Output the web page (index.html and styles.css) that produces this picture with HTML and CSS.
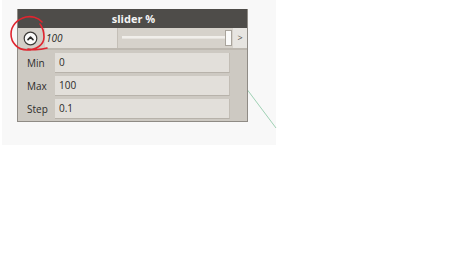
FILE: index.html
```html
<!DOCTYPE html>
<html>
<head>
<meta charset="utf-8">
<link rel="stylesheet" href="styles.css">
</head>
<body>
<div class="canvas">
  <svg class="wire" width="40" height="50" viewBox="0 0 40 50"><line x1="1" y1="1" x2="31" y2="41" stroke="#9fd1b4" stroke-width="1"/></svg>
  <div class="node">
    <div class="header">slider %</div>
    <div class="toprow">
      <div class="btncell">
        <svg class="caret" width="15" height="15" viewBox="0 0 15 15"><circle cx="7.5" cy="7.5" r="6.3" fill="#fbfbfa" stroke="#3d3b38" stroke-width="1.2"/><path d="M5 8.6 L7.5 6.1 L10 8.6" fill="none" stroke="#2a2927" stroke-width="1.6" stroke-linecap="round" stroke-linejoin="round"/></svg>
      </div>
      <div class="valfield">100</div>
      <div class="slider"><div class="track"></div><div class="thumb"></div></div>
      <div class="next">&gt;</div>
    </div>
    <div class="rows">
      <div class="row"><div class="label">Min</div><div class="field">0</div></div>
      <div class="row"><div class="label">Max</div><div class="field">100</div></div>
      <div class="row"><div class="label">Step</div><div class="field">0.1</div></div>
    </div>
  </div>
  <svg class="mark" width="44" height="40" viewBox="0 0 44 40"><path d="M33 8 C29 3 22 2 17 3 C8 5 2 12 2 20 C2 29 9 36 18 36 C27 36 35 31 35 23 C35 18 34 14 31 10 M19 35 C24 36 31 36 38 34" fill="none" stroke="#e0252f" stroke-width="1.6" stroke-linecap="round"/></svg>
</div>
</body>
</html>
```

FILE: styles.css
```css
html, body {
  margin: 0;
  padding: 0;
  background: #ffffff;
}
body {
  font-family: "Open Sans", "Noto Sans", sans-serif;
}
.canvas {
  position: relative;
  margin-left: 2px;
  width: 274px;
  height: 145px;
  background: #f8f8f8;
}
.node {
  position: absolute;
  left: 15px;
  top: 9px;
  width: 229px;
  border: 1px solid #8f8b85;
  border-top: none;
  background: #cdc9c2;
  display: flex;
  flex-direction: column;
}
.header {
  height: 19px;
  background: #4e4c49;
  color: #f4f4f4;
  font-size: 11px;
  font-weight: 700;
  line-height: 19px;
  text-align: center;
  padding-left: 2px;
}
.toprow {
  height: 20px;
  display: flex;
  align-items: stretch;
  border-bottom: 2px solid #bdb8b0;
}
.btncell {
  width: 27px;
  display: flex;
  align-items: center;
  justify-content: center;
  background: #d3cfc8;
}
.caret {
  display: block;
  margin-left: -3px;
}
.valfield {
  width: 71px;
  background: #e3e0db;
  font-size: 10px;
  font-style: italic;
  color: #2b2a28;
  line-height: 20px;
  padding-left: 1px;
  border-right: 1px solid #c4bfb7;
}
.slider {
  flex: 1;
  position: relative;
  background: #d6d2cb;
}
.track {
  position: absolute;
  left: 4px;
  right: 6px;
  top: 8px;
  height: 2px;
  background: #f1efeb;
  border-bottom: 1px solid #e6e3de;
}
.thumb {
  position: absolute;
  right: 1px;
  top: 2px;
  width: 5px;
  height: 14px;
  background: #fbfbfa;
  border: 1px solid #a9a49c;
}
.next {
  width: 14px;
  background: #e7e5e1;
  color: #55524d;
  font-size: 9px;
  line-height: 20px;
  text-align: center;
}
.rows {
  display: flex;
  flex-direction: column;
  gap: 3px;
  padding: 3px 17px 2px 0;
}
.row {
  display: flex;
  height: 20px;
}
.label {
  width: 37px;
  padding-left: 9px;
  box-sizing: border-box;
  font-size: 10px;
  line-height: 20px;
  color: #2e2d2b;
}
.field {
  flex: 1;
  background: #e2dfda;
  border-right: 1px solid #c2bdb5;
  border-bottom: 1px solid #b7b2aa;
  font-size: 10px;
  line-height: 19px;
  padding-left: 4px;
  color: #2b2a28;
}
.wire {
  position: absolute;
  left: 243px;
  top: 87px;
}
.mark {
  position: absolute;
  left: 7px;
  top: 14px;
}
```
